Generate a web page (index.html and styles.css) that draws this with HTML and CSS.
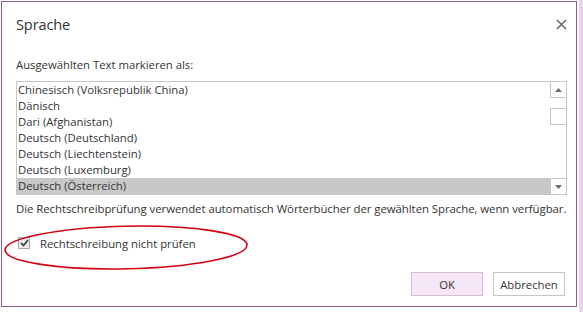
FILE: index.html
```html
<!DOCTYPE html>
<html lang="de">
<head>
<meta charset="utf-8">
<title>Sprache</title>
<link rel="stylesheet" href="styles.css">
</head>
<body>
<div class="dialog">
  <div class="titlebar">
    <div class="title">Sprache</div>
    <svg class="close" width="11" height="11" viewBox="0 0 11 11"><path d="M1 1L10 10M10 1L1 10" stroke="#6b6b6b" stroke-width="1.6"/></svg>
  </div>
  <div class="label">Ausgewählten Text markieren als:</div>
  <div class="listbox">
    <div class="items">
      <div class="item">Chinesisch (Volksrepublik China)</div>
      <div class="item">Dänisch</div>
      <div class="item">Dari (Afghanistan)</div>
      <div class="item">Deutsch (Deutschland)</div>
      <div class="item">Deutsch (Liechtenstein)</div>
      <div class="item">Deutsch (Luxemburg)</div>
      <div class="item selected">Deutsch (Österreich)</div>
    </div>
    <div class="scrollbar">
      <div class="sbtn"><svg width="7" height="4" viewBox="0 0 7 4"><path d="M0 4L3.5 0L7 4Z" fill="#6e6e6e"/></svg></div>
      <div class="track"><div class="thumb"></div></div>
      <div class="sbtn"><svg width="7" height="4" viewBox="0 0 7 4"><path d="M0 0L3.5 4L7 0Z" fill="#6e6e6e"/></svg></div>
    </div>
  </div>
  <div class="desc">Die Rechtschreibprüfung verwendet automatisch Wörterbücher der gewählten Sprache, wenn verfügbar.</div>
  <div class="checkrow">
    <div class="checkbox"><svg width="9" height="8" viewBox="0 0 9 8"><path d="M1 4L3.5 6.5L8 1.2" fill="none" stroke="#444" stroke-width="1.8"/></svg></div>
    <span class="checklabel">Rechtschreibung nicht prüfen</span>
  </div>
  <div class="buttons">
    <button class="btn ok">OK</button>
    <button class="btn">Abbrechen</button>
  </div>
  <svg class="ellipse" width="250" height="50" viewBox="0 0 250 50"><ellipse cx="124" cy="23.5" rx="121" ry="21.3" transform="rotate(-1.2 124 23.5)" fill="none" stroke="#d5000f" stroke-width="1.6"/></svg>
</div>
</body>
</html>
```
FILE: styles.css
```css
html, body {
  margin: 0;
  padding: 0;
  background: #ffffff;
}
body {
  width: 583px;
  height: 312px;
  position: relative;
  overflow: hidden;
  font-family: "Open Sans", "Noto Sans", sans-serif;
  color: #333333;
}
body::after {
  content: "";
  position: absolute;
  left: 579px;
  top: 0;
  width: 4px;
  height: 312px;
  background: #e9d3ea;
}
.dialog {
  position: absolute;
  left: 1px;
  top: 1px;
  width: 576px;
  height: 306px;
  border: 1px solid #8e5a90;
  background: #fff;
  box-sizing: border-box;
  padding: 0 14px 0 14px;
}
.titlebar {
  display: flex;
  justify-content: space-between;
  align-items: center;
  height: 44px;
}
.title {
  font-size: 14.6px;
  color: #333;
  letter-spacing: -0.15px;
}
.close {
  margin-right: -5px;
  margin-top: 1px;
}
.label {
  margin-top: 11px;
  font-size: 11.3px;
  line-height: 16px;
  height: 24px;
}
.listbox {
  display: flex;
  width: 551px;
  height: 114px;
  border: 1px solid #c6c6c6;
  box-sizing: border-box;
}
.items {
  flex: 1;
}
.item {
  height: 16px;
  line-height: 16px;
  font-size: 11.3px;
  padding-left: 1px;
  white-space: nowrap;
}
.item.selected {
  background: #c8c8c8;
}
.scrollbar {
  width: 16px;
  display: flex;
  flex-direction: column;
  background: #fff;
}
.sbtn {
  height: 16px;
  border: 1px solid #c6c6c6;
  border-right: none;
  border-top: none;
  box-sizing: border-box;
  display: flex;
  align-items: center;
  justify-content: center;
}
.sbtn:last-child {
  border-top: 1px solid #c6c6c6;
  border-bottom: none;
}
.track {
  flex: 1;
  padding-top: 10px;
}
.thumb {
  height: 17px;
  border: 1px solid #c6c6c6;
  border-right: none;
  box-sizing: border-box;
}
.desc {
  font-size: 11.4px;
  line-height: 16px;
  margin-top: 6px;
  white-space: nowrap;
  letter-spacing: -0.05px;
}
.checkrow {
  display: flex;
  align-items: center;
  margin-top: 16px;
  margin-left: 2px;
  height: 20px;
}
.checkbox {
  width: 12px;
  height: 12px;
  border: 1px solid #a8a8a8;
  box-sizing: border-box;
  background: #ececec;
  display: flex;
  align-items: center;
  justify-content: center;
}
.checklabel {
  margin-left: 10px;
  font-size: 11.3px;
}
.ellipse {
  position: absolute;
  left: 0;
  top: 222px;
}
.buttons {
  display: flex;
  justify-content: flex-end;
  gap: 10px;
  margin-top: 19px;
  margin-right: -3px;
}
.btn {
  font-family: "Open Sans", "Noto Sans", sans-serif;
  font-size: 11.3px;
  color: #333;
  height: 24px;
  width: 72px;
  background: #fff;
  border: 1px solid #c6c6c6;
  padding: 0;
}
.btn.ok {
  background: #f5e6f5;
  border-color: #d6bcd7;
}
```
